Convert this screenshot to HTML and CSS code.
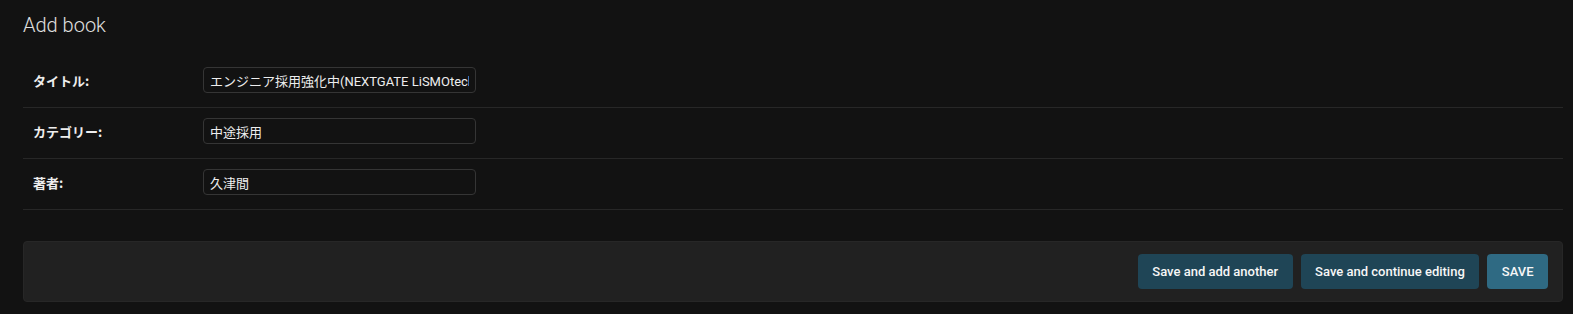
FILE: index.html
```html
<!DOCTYPE html>
<html lang="ja">
<head>
<meta charset="utf-8">
<title>Add book</title>
<link rel="stylesheet" href="styles.css">
</head>
<body>
<div class="content">
  <h1 class="title">Add book</h1>
  <form class="form">
    <fieldset class="module">
      <div class="form-row">
        <label class="label" for="id_title">タイトル:</label>
        <input class="text-input" id="id_title" type="text" value="エンジニア採用強化中(NEXTGATE LiSMOtech)">
      </div>
      <div class="form-row">
        <label class="label" for="id_category">カテゴリー:</label>
        <input class="text-input" id="id_category" type="text" value="中途採用">
      </div>
      <div class="form-row">
        <label class="label" for="id_author">著者:</label>
        <input class="text-input" id="id_author" type="text" value="久津間">
      </div>
    </fieldset>
    <div class="submit-row">
      <button type="button" class="btn">Save and add another</button>
      <button type="button" class="btn">Save and continue editing</button>
      <button type="button" class="btn btn-default">SAVE</button>
    </div>
  </form>
</div>
</body>
</html>
```

FILE: styles.css
```css
html, body {
  margin: 0;
  padding: 0;
  background: #121212;
}
body {
  font-family: Roboto, "Noto Sans CJK JP", sans-serif;
  color: #eeeeee;
  font-size: 14px;
}
.content {
  padding: 13px 10px 0 23px;
}
.title {
  margin: 0 0 20px;
  font-size: 20px;
  line-height: 24px;
  font-weight: 300;
  color: #e0e0e0;
}
.form {
  margin: 0;
}
.module {
  margin: 0;
  padding: 0;
  border: 0;
  min-width: 0;
}
.form-row {
  display: flex;
  align-items: flex-start;
  padding: 10px 10px 14px;
  border-bottom: 1px solid #272727;
}
.label {
  width: 160px;
  padding: 5px 10px 0 0;
  font-weight: bold;
  font-size: 13px;
  line-height: 18px;
  color: #eeeeee;
  font-family: "Noto Sans CJK JP", sans-serif;
}
.text-input {
  box-sizing: border-box;
  width: 273px;
  height: 26px;
  padding: 2px 6px;
  margin: 0;
  background: #121212;
  color: #eeeeee;
  border: 1px solid #353535;
  border-radius: 4px;
  font-family: Roboto, "Noto Sans CJK JP", sans-serif;
  font-size: 13px;
  outline: none;
}
.submit-row {
  display: flex;
  justify-content: flex-end;
  gap: 8px;
  margin-top: 31px;
  padding: 12px 14px;
  background: #212121;
  border: 1px solid #272727;
  border-radius: 4px;
}
.btn {
  height: 35px;
  padding: 0 14.5px;
  border: 0;
  border-radius: 4px;
  background: #1f4556;
  color: #f7f7f7;
  font-family: Roboto, sans-serif;
  font-size: 13px;
  font-weight: 500;
  cursor: pointer;
}
.btn-default {
  background: #2f6a83;
}
```
